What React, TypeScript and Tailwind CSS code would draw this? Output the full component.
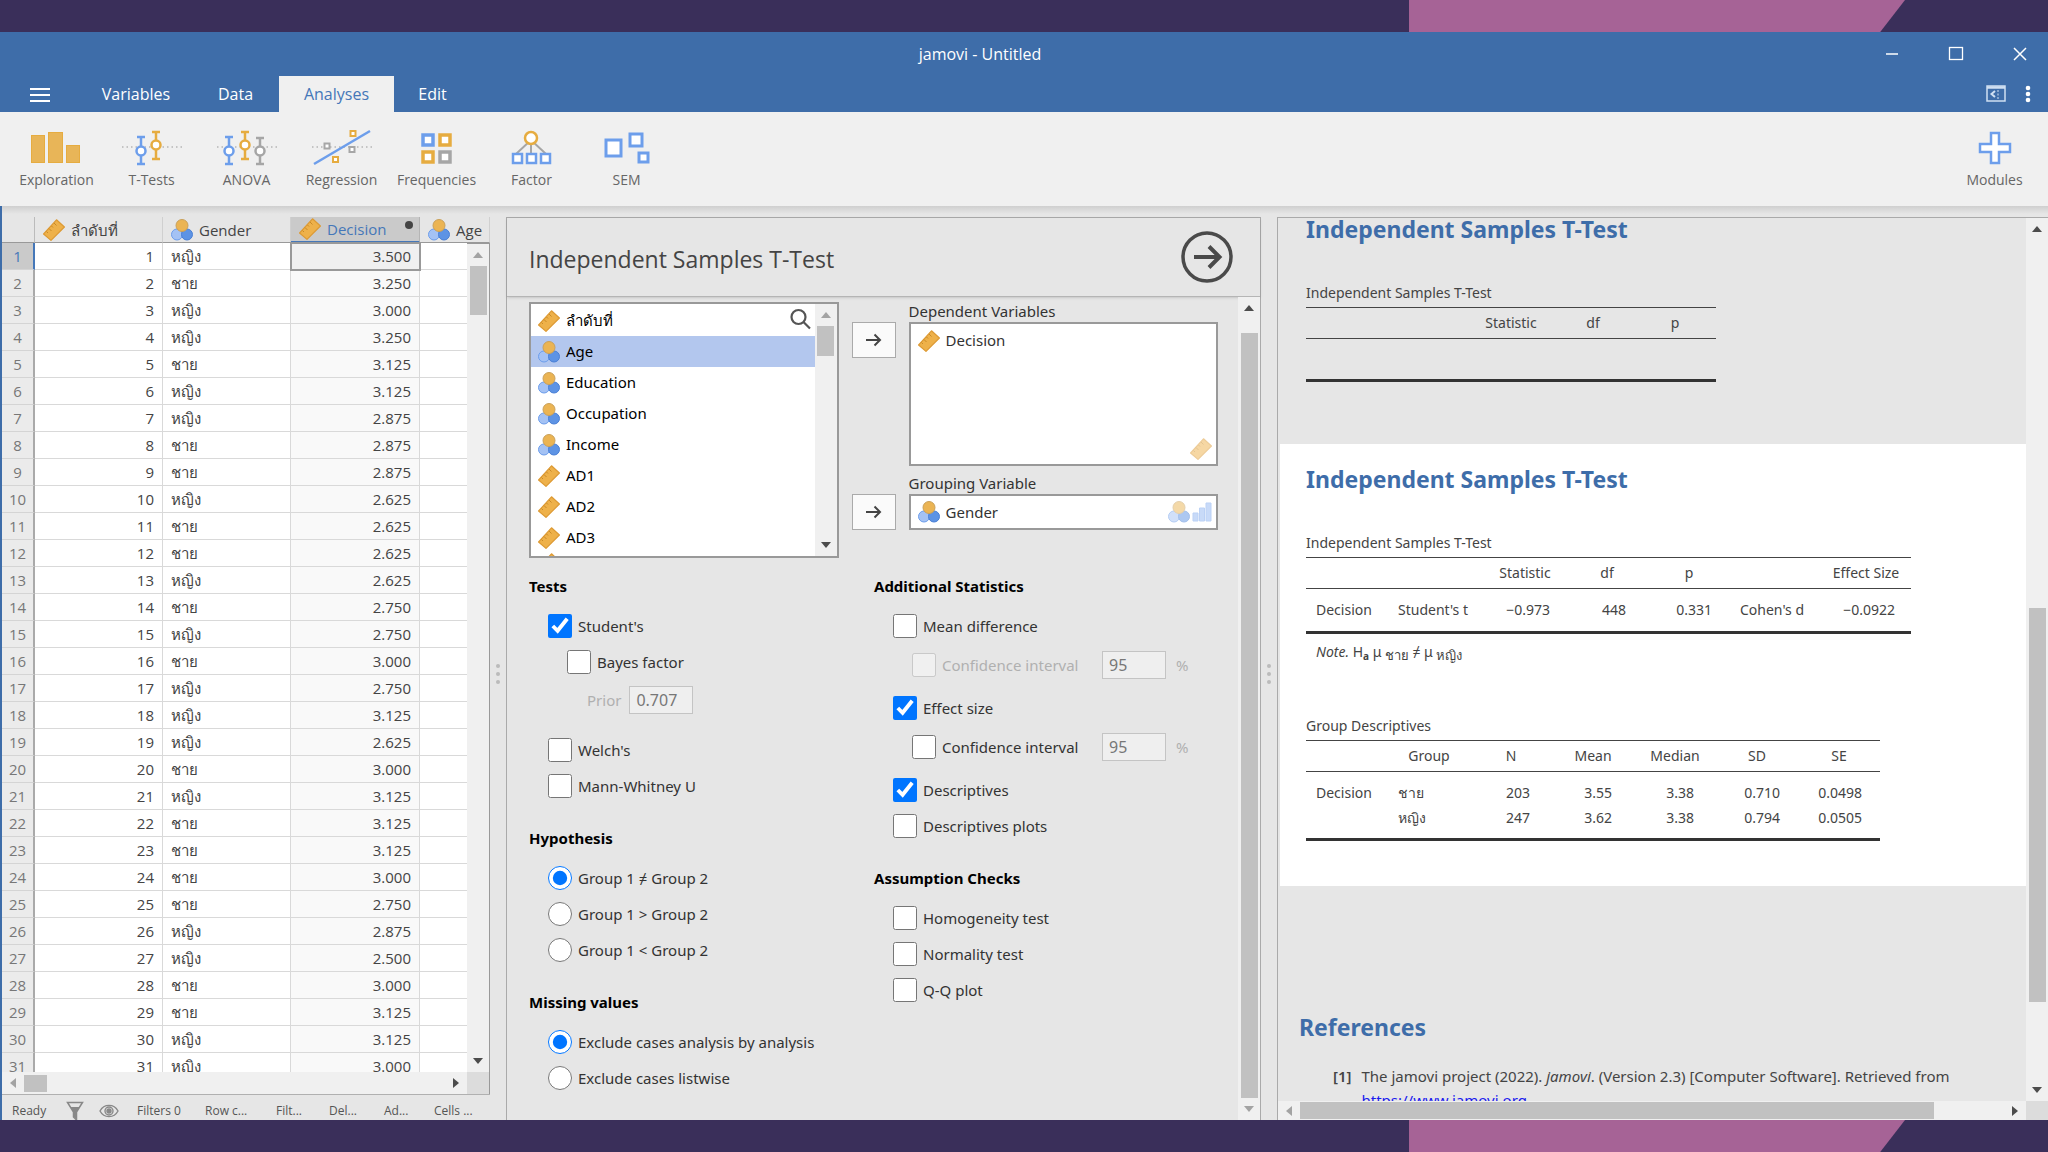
import React from "react";
import { clsx } from "clsx";

/* ---------- data ---------- */

const FEMALE = "หญิง";
const MALE = "ชาย";

const rows: [string, string][] = [
  [FEMALE, "3.500"], [MALE, "3.250"], [FEMALE, "3.000"], [FEMALE, "3.250"], [MALE, "3.125"],
  [FEMALE, "3.125"], [FEMALE, "2.875"], [MALE, "2.875"], [MALE, "2.875"], [FEMALE, "2.625"],
  [MALE, "2.625"], [MALE, "2.625"], [FEMALE, "2.625"], [MALE, "2.750"], [FEMALE, "2.750"],
  [MALE, "3.000"], [FEMALE, "2.750"], [FEMALE, "3.125"], [FEMALE, "2.625"], [MALE, "3.000"],
  [FEMALE, "3.125"], [MALE, "3.125"], [MALE, "3.125"], [MALE, "3.000"], [MALE, "2.750"],
  [FEMALE, "2.875"], [FEMALE, "2.500"], [MALE, "3.000"], [MALE, "3.125"], [FEMALE, "3.125"],
  [FEMALE, "3.000"],
];

const BLUE = "#6d9eeb";
const ORANGE = "#e6ac40";
const GREY = "#a6a6a6";

/* ---------- icons ---------- */

function Ruler({ faded }: { faded?: boolean }) {
  return (
    <svg viewBox="0 0 22 22" className={clsx("size-[22px] shrink-0", faded && "opacity-50")} aria-hidden="true">
      <path d="M13.500 0.800 L21.400 8 L8 21.400 L0.600 15 Z" fill="#eeb14a" stroke="#dd9a34" strokeWidth="1.200" strokeLinejoin="round" />
      <path d="M3.500 12.500 l1.500 1.500 M6 9.500 l2.500 2.500 M8.500 7 l1.500 1.500 M11 4 l2.500 2.500" stroke="#c98a28" strokeWidth="1" />
    </svg>
  );
}

function Nominal({ faded }: { faded?: boolean }) {
  return (
    <svg viewBox="0 0 22 22" className={clsx("size-[22px] shrink-0", faded && "opacity-50")} aria-hidden="true">
      <circle cx="6" cy="15.500" r="5.500" fill="#a4c2f4" stroke="#6d9eeb" />
      <circle cx="16" cy="15.500" r="5.500" fill="#5d93e4" stroke="#4a80d6" />
      <circle cx="11" cy="6.500" r="6" fill="#ebb453" stroke="#c9a05a" />
    </svg>
  );
}

function Ordinal() {
  return (
    <svg viewBox="0 0 20 20" className="size-5 shrink-0 opacity-60" aria-hidden="true">
      <path d="M1 19V11H6V19ZM7.500 19V6H12.500V19ZM14 19V1H19V19Z" fill="#a4c2f4" stroke="#8fb4f0" />
    </svg>
  );
}

const ribbonSvg = "h-10 w-[60px]";

function ErrorBar({ x, top, bottom, mid, color }: { x: number; top: number; bottom: number; mid: number; color: string }) {
  return (
    <g stroke={color} strokeWidth="2.500" fill="none">
      <path d={`M${x - 4} ${top}H${x + 4}M${x - 4} ${bottom}H${x + 4}M${x} ${top}V${bottom}`} />
      <circle cx={x} cy={mid} r="4.500" fill="#fff" />
    </g>
  );
}

const dotted = <path d="M0 19H60" stroke="#b5b5b5" strokeWidth="1.500" strokeDasharray="1.500 3" />;

const ribbon: { label: string; icon: React.ReactNode }[] = [
  {
    label: "Exploration",
    icon: (
      <g fill="#e8b558" stroke="#e6ac40">
        <rect x="4.500" y="7.500" width="13" height="27" />
        <rect x="21.500" y="4.500" width="14" height="30" />
        <rect x="39.500" y="17.500" width="13" height="17" />
      </g>
    ),
  },
  {
    label: "T-Tests",
    icon: (
      <>
        {dotted}
        <ErrorBar x={19} top={9} bottom={36} mid={23} color={BLUE} />
        <ErrorBar x={34} top={4} bottom={31} mid={17} color={ORANGE} />
      </>
    ),
  },
  {
    label: "ANOVA",
    icon: (
      <>
        {dotted}
        <ErrorBar x={12} top={9} bottom={36} mid={23} color={BLUE} />
        <ErrorBar x={28} top={4} bottom={31} mid={17} color={ORANGE} />
        <ErrorBar x={43} top={10} bottom={36} mid={23} color={GREY} />
      </>
    ),
  },
  {
    label: "Regression",
    icon: (
      <>
        {dotted}
        <path d="M2 36L58 3" stroke={BLUE} strokeWidth="2.500" />
        <g fill="#fff" strokeWidth="2">
          <rect x="12.500" y="15.500" width="5" height="5" stroke={GREY} />
          <rect x="38.500" y="3" width="5" height="5" stroke={ORANGE} />
          <rect x="37.500" y="19" width="5" height="5" stroke={GREY} />
          <rect x="21" y="29" width="5" height="5" stroke={ORANGE} />
        </g>
      </>
    ),
  },
  {
    label: "Frequencies",
    icon: (
      <g fill="#fff" strokeWidth="3.500">
        <rect x="16" y="7" width="10" height="10" stroke={BLUE} />
        <rect x="33" y="7" width="10" height="10" stroke={ORANGE} />
        <rect x="16" y="24" width="10" height="10" stroke={ORANGE} />
        <rect x="33" y="24" width="10" height="10" stroke={GREY} />
      </g>
    ),
  },
  {
    label: "Factor",
    icon: (
      <>
        <path d="M29 12L14 26M29 12V26M29 12L44 26" stroke={GREY} strokeWidth="2" />
        <circle cx="29" cy="10" r="6" fill="#fff" stroke={ORANGE} strokeWidth="2.500" />
        <g fill="#fff" stroke={BLUE} strokeWidth="2.500">
          <rect x="11" y="26" width="9" height="9" />
          <rect x="25" y="26" width="9" height="9" />
          <rect x="39" y="26" width="9" height="9" />
        </g>
      </>
    ),
  },
  {
    label: "SEM",
    icon: (
      <g fill="#fff" stroke={BLUE} strokeWidth="3">
        <rect x="9" y="12" width="15" height="16" />
        <rect x="33" y="6" width="12" height="12" />
        <rect x="42" y="25" width="9" height="9" />
      </g>
    ),
  },
];

/* ---------- scrollbars ---------- */

function Arrow({ dir, dim }: { dir: "up" | "down" | "left" | "right"; dim?: boolean }) {
  const d = {
    up: "M1 9L6 3L11 9Z",
    down: "M1 3L6 9L11 3Z",
    left: "M9 1L3 6L9 11Z",
    right: "M3 1L9 6L3 11Z",
  }[dir];
  return (
    <svg viewBox="0 0 12 12" className={clsx("size-3 shrink-0", dim ? "text-[#a3a3a3]" : "text-[#4c4c4c]")} aria-hidden="true">
      <path d={d} fill="currentColor" />
    </svg>
  );
}

function VScroll({ before, size, upDim, downDim }: { before: string; size: string; upDim?: boolean; downDim?: boolean }) {
  return (
    <div className="flex w-[22px] shrink-0 flex-col items-center bg-[#f0f0f0]">
      <div className="flex h-[22px] shrink-0 items-center"><Arrow dir="up" dim={upDim} /></div>
      <div className="flex min-h-0 w-[17px] flex-1 flex-col">
        <div className={before} />
        <div className={clsx("bg-[#c1c1c1]", size)} />
      </div>
      <div className="flex h-[22px] shrink-0 items-center"><Arrow dir="down" dim={downDim} /></div>
    </div>
  );
}

function HScroll({ size }: { size: string }) {
  return (
    <div className="flex h-full flex-1 items-center bg-[#f0f0f0]">
      <div className="flex w-[22px] shrink-0 justify-center"><Arrow dir="left" dim /></div>
      <div className="h-[17px] min-w-0 flex-1"><div className={clsx("h-full bg-[#c1c1c1]", size)} /></div>
      <div className="flex w-[22px] shrink-0 justify-center"><Arrow dir="right" /></div>
    </div>
  );
}

/* ---------- header ---------- */

function TitleBar() {
  return (
    <div className="grid h-11 shrink-0 grid-cols-[1fr_auto_1fr] items-center text-white">
      <span />
      <h1 className="pr-[88px] text-base">jamovi - Untitled</h1>
      <div className="flex justify-end gap-[38px] pr-[15px]">
        <button aria-label="Minimize" className="p-1">
          <svg viewBox="0 0 18 18" className="size-[18px]"><path d="M3 9H15" stroke="#fff" strokeWidth="1.500" /></svg>
        </button>
        <button aria-label="Maximize" className="p-1">
          <svg viewBox="0 0 18 18" className="size-[18px]"><rect x="2.500" y="2.500" width="13" height="12" fill="none" stroke="#fff" strokeWidth="1.300" /></svg>
        </button>
        <button aria-label="Close" className="p-1">
          <svg viewBox="0 0 18 18" className="size-[18px]"><path d="M3 3L15 15M15 3L3 15" stroke="#fff" strokeWidth="1.500" /></svg>
        </button>
      </div>
    </div>
  );
}

function Tabs() {
  return (
    <div className="flex h-9 shrink-0 items-stretch text-base text-white">
      <button aria-label="Menu" className="flex w-20 items-center justify-center">
        <svg viewBox="0 0 20 16" className="h-4 w-5"><path d="M0 3H20M0 9H20M0 15H20" stroke="#fff" strokeWidth="2.200" /></svg>
      </button>
      <button className="w-28">Variables</button>
      <button className="w-[87px]">Data</button>
      <button className="w-[115px] bg-[#f0f0f0] text-[#4577b8]">Analyses</button>
      <button className="w-[77px]">Edit</button>
      <div className="ml-auto flex items-center gap-[18px] pr-4">
        <button aria-label="Toggle results pane">
          <svg viewBox="0 0 20 18" className="h-[18px] w-5" fill="none" stroke="#cfdff2">
            <rect x="1" y="1" width="18" height="15" strokeWidth="1.500" />
            <path d="M1 2.500H19" strokeWidth="2.500" />
            <path d="M9 6L5.500 9L9 12" strokeWidth="2" />
            <path d="M12 5V15" strokeDasharray="2 1.500" />
          </svg>
        </button>
        <button aria-label="More options">
          <svg viewBox="0 0 8 18" className="h-[18px] w-2" fill="#fff"><circle cx="4" cy="3" r="2.300" /><circle cx="4" cy="9" r="2.300" /><circle cx="4" cy="15" r="2.300" /></svg>
        </button>
      </div>
    </div>
  );
}

function Ribbon() {
  return (
    <nav className="flex h-[94px] shrink-0 bg-[#f0f0f0] pl-[9px] text-sm text-[#666]">
      {ribbon.map((item) => (
        <button key={item.label} className="flex w-[95px] flex-col items-center pt-4">
          <svg viewBox="0 0 60 40" className={ribbonSvg} fill="none" aria-hidden="true">{item.icon}</svg>
          <span className="mt-0.5">{item.label}</span>
        </button>
      ))}
      <button className="mr-1.5 ml-auto flex w-[95px] flex-col items-center pt-4">
        <svg viewBox="0 0 60 40" className={ribbonSvg} aria-hidden="true">
          <path d="M26 5H34V16H45V24H34V35H26V24H15V16H26Z" fill="#fff" stroke={BLUE} strokeWidth="2.500" />
        </svg>
        <span className="mt-0.5">Modules</span>
      </button>
    </nav>
  );
}

/* ---------- spreadsheet ---------- */

function ColumnHead({ icon, label, active }: { icon: React.ReactNode; label: string; active?: boolean }) {
  return (
    <th
      className={clsx(
        "h-[26px] border-r border-b p-0 text-left font-normal",
        active ? "border-r-[#b5b5b5] border-b-2 border-b-[#4577b8] bg-[#cacaca] text-[#4577b8]" : "border-r-[#d0d0d0] border-b-[#999] text-[#444]",
      )}
    >
      <div className="relative flex h-6 items-center gap-1.5 pl-2">
        {icon}
        <span className="leading-6">{label}</span>
        {active && <span className="absolute top-1 right-1.5 size-2 rounded-full bg-[#444]" />}
      </div>
    </th>
  );
}

function DataSheet() {
  return (
    <section className="flex min-h-0 w-[488px] shrink-0 flex-col">
      <div className="flex min-h-0 flex-1 border-b border-[#b0b0b0]">
        <div className="flex min-h-0 min-w-0 flex-1 flex-col">
          <div className="min-h-0 flex-1 overflow-hidden">
            <table className="w-full table-fixed border-separate border-spacing-0 text-[15px] leading-5 text-[#444]">
              <colgroup>
                <col className="w-[33px]" />
                <col className="w-32" />
                <col className="w-32" />
                <col className="w-[129px]" />
                <col />
              </colgroup>
              <thead>
                <tr>
                  <th aria-label="Row" className="border-r border-b border-r-[#bbb] border-b-[#999]" />
                  <ColumnHead icon={<Ruler />} label="ลำดับที่" />
                  <ColumnHead icon={<Nominal />} label="Gender" />
                  <ColumnHead icon={<Ruler />} label="Decision" active />
                  <ColumnHead icon={<Nominal />} label="Age" />
                </tr>
              </thead>
              <tbody>
                {rows.map(([gender, value], i) => (
                  <tr key={i}>
                    <th
                      className={clsx(
                        "h-[27px] overflow-hidden border-r-2 border-b border-b-[#d4d4d4] p-0 font-normal",
                        i === 0 ? "border-r-[#4577b8] bg-[#cacaca] text-[#4577b8]" : "border-r-[#aaa] bg-[#ebebeb] text-[#777]",
                      )}
                    >
                      {i + 1}
                    </th>
                    <td className="border-r border-b border-[#d9d9d9] bg-white py-0 pr-2 pl-0 text-right">{i + 1}</td>
                    <td className="border-r border-b border-[#d9d9d9] bg-white py-0 pr-0 pl-2">{gender}</td>
                    <td
                      className={clsx(
                        "border-r border-b py-0 pr-2 pl-0 text-right",
                        i === 0 ? "border-[#999] bg-[#f0f0f0] outline-2 -outline-offset-1 outline-[#999]" : "border-[#d9d9d9] bg-[#f9f9f9]",
                      )}
                    >
                      {value}
                    </td>
                    <td className="border-b border-[#d9d9d9] bg-white" />
                  </tr>
                ))}
              </tbody>
            </table>
          </div>
          <div className="flex h-[22px] shrink-0 pr-[23px]"><HScroll size="w-[23px]" /></div>
        </div>
        <div className="relative mt-[26px] -ml-[23px] flex w-[23px] shrink-0 flex-col">
          <div className="flex min-h-0 flex-1 border-t border-r border-[#999]">
            <VScroll before="h-0" size="h-[49px]" upDim />
          </div>
          <div className="h-[22px] border-r border-[#999] bg-[#dcdcdc]" />
        </div>
      </div>
      <footer className="flex h-[25px] shrink-0 items-center pt-1.5 pl-2.5 text-xs text-[#555]">
        <span className="w-[54px]">Ready</span>
        <button aria-label="Filters" className="w-[33px]">
          <svg viewBox="0 0 18 20" className="h-5 w-[18px]" fill="none" stroke="#888" strokeWidth="1.500">
            <path d="M1.500 1.500H16.500L10.500 11V19L7.500 16V11Z" />
            <path d="M4.500 6H13.500L10.500 11V18L7.500 16V11Z" fill="#888" stroke="none" />
          </svg>
        </button>
        <button aria-label="Show filtered rows" className="w-[38px]">
          <svg viewBox="0 0 20 14" className="h-[14px] w-5" fill="none" stroke="#888" strokeWidth="1.400">
            <path d="M1 7C5 -0.500 15 -0.500 19 7C15 14.500 5 14.500 1 7Z" /><circle cx="10" cy="7" r="4" /><circle cx="10" cy="7" r="2" fill="#888" />
          </svg>
        </button>
        <span className="w-[68px]">Filters 0</span>
        <span className="w-[71px]">Row c...</span>
        <span className="w-[53px]">Filt...</span>
        <span className="w-[55px]">Del...</span>
        <span className="w-[50px]">Ad...</span>
        <span className="whitespace-nowrap">Cells ...</span>
      </footer>
    </section>
  );
}

function Splitter() {
  return (
    <div className="flex w-4 shrink-0 flex-col items-center justify-center gap-1 pt-2.5" role="separator">
      <span className="size-1 rounded-full bg-[#bbb]" />
      <span className="size-1 rounded-full bg-[#bbb]" />
      <span className="size-1 rounded-full bg-[#bbb]" />
    </div>
  );
}

/* ---------- analysis options ---------- */

function VarItem({ kind, label, selected }: { kind: "ruler" | "nominal"; label: string; selected?: boolean }) {
  return (
    <li className={clsx("flex h-[31px] shrink-0 items-center gap-1.5 pl-[7px]", selected && "bg-[#b3c7ee]")}>
      {kind === "ruler" ? <Ruler /> : <Nominal />}
      <span>{label}</span>
    </li>
  );
}

function AssignButton({ label }: { label: string }) {
  return (
    <button aria-label={label} className="flex h-9 w-11 items-center justify-center border border-[#aaa] bg-[#fafafa]">
      <svg viewBox="0 0 18 16" className="h-4 w-[18px]" fill="none" stroke="#444" strokeWidth="2"><path d="M1 8H15M9.500 2.500L15 8L9.500 13.500" /></svg>
    </button>
  );
}

function Option({ type = "checkbox", name, label, checked, disabled, indent }: {
  type?: "checkbox" | "radio"; name?: string; label: string; checked?: boolean; disabled?: boolean; indent?: boolean;
}) {
  return (
    <label className={clsx("flex h-9 items-center gap-1.5", indent ? "pl-[38px]" : "pl-[19px]", disabled && "text-[#b0b0b0]")}>
      <input type={type} name={name} defaultChecked={checked} disabled={disabled} className="m-0 size-6 shrink-0 accent-[#0075ff]" />
      <span>{label}</span>
    </label>
  );
}

function OptHeading({ children }: { children: React.ReactNode }) {
  return <h3 className="flex h-11 items-center font-bold text-black">{children}</h3>;
}

const numberBox = "h-7 w-16 border border-[#c4c4c4] bg-[#efefef] px-1.5 text-base text-[#777]";

function ConfidenceRow({ disabled, id }: { disabled?: boolean; id: string }) {
  return (
    <div className="mb-1 flex h-[42px] items-center">
      <div className="w-[228px]"><Option label="Confidence interval" indent disabled={disabled} /></div>
      <input id={id} aria-label="Confidence level" defaultValue="95" disabled className={numberBox} />
      <label htmlFor={id} className="ml-2.5 text-[#b0b0b0]">%</label>
    </div>
  );
}

function OptionsPanel() {
  return (
    <section className="flex min-h-0 w-[755px] shrink-0 flex-col border-t border-r border-l border-[#aaa]">
      <header className="flex h-[79px] shrink-0 items-center justify-between border-b border-[#b5b5b5] pr-[27px] pl-[22px] shadow-sm">
        <h2 className="pt-1 text-[23px] text-[#444]">Independent Samples T-Test</h2>
        <button aria-label="Hide options">
          <svg viewBox="0 0 52 52" className="size-[52px]" fill="none" stroke="#4a4a4a">
            <circle cx="26" cy="26" r="24" strokeWidth="3.500" />
            <path d="M13 26H38M28 15.500L38.500 26L28 36.500" strokeWidth="4" />
          </svg>
        </button>
      </header>
      <div className="flex min-h-0 flex-1">
        <div className="min-w-0 flex-1 overflow-hidden pt-[5px] pr-5 pl-[22px] font-['Noto_Sans','Open_Sans',sans-serif] text-[15px] text-[#333]">
          <div className="flex gap-[13px]">
            <div className="flex h-64 w-[310px] border-2 border-[#999] bg-white">
              <div className="relative min-w-0 flex-1 overflow-hidden">
                <ul className="flex flex-col pt-px text-black">
                  <VarItem kind="ruler" label="ลำดับที่" />
                  <VarItem kind="nominal" label="Age" selected />
                  <VarItem kind="nominal" label="Education" />
                  <VarItem kind="nominal" label="Occupation" />
                  <VarItem kind="nominal" label="Income" />
                  <VarItem kind="ruler" label="AD1" />
                  <VarItem kind="ruler" label="AD2" />
                  <VarItem kind="ruler" label="AD3" />
                  <li className="pl-[7px]"><Ruler /></li>
                </ul>
                <button aria-label="Search variables" className="absolute top-1 right-1">
                  <svg viewBox="0 0 22 22" className="size-[22px]" fill="none" stroke="#555" strokeWidth="2.200"><circle cx="9.500" cy="9" r="7" /><path d="M14.500 14L21 20.500" /></svg>
                </button>
              </div>
              <VScroll before="h-0" size="h-[30px]" upDim />
            </div>
            <div className="flex flex-col gap-[136px] pt-5">
              <AssignButton label="Move to dependent variables" />
              <AssignButton label="Move to grouping variable" />
            </div>
            <div className="w-[310px]">
              <div className="h-5 leading-[18px]">Dependent Variables</div>
              <ul className="relative h-36 border-2 border-[#999] bg-white pt-px">
                <VarItem kind="ruler" label="Decision" />
                <li className="absolute right-1 bottom-1"><Ruler faded /></li>
              </ul>
              <div className="mt-2 h-5 leading-[18px]">Grouping Variable</div>
              <ul className="flex h-9 items-center justify-between border-2 border-[#999] bg-white pr-1">
                <VarItem kind="nominal" label="Gender" />
                <li className="flex items-center gap-0.5"><Nominal faded /><Ordinal /></li>
              </ul>
            </div>
          </div>

          <div className="mt-1.5 grid grid-cols-[345px_1fr]">
            <div className="flex flex-col gap-3">
              <div>
                <OptHeading>Tests</OptHeading>
                <Option label="Student's" checked />
                <Option label="Bayes factor" indent />
                <div className="flex h-10 items-center gap-2 pl-[58px]">
                  <label htmlFor="prior" className="text-[#b0b0b0]">Prior</label>
                  <input id="prior" defaultValue="0.707" disabled className={numberBox} />
                </div>
                <div className="mt-3">
                  <Option label="Welch's" />
                  <Option label="Mann-Whitney U" />
                </div>
              </div>
              <div>
                <OptHeading>Hypothesis</OptHeading>
                <Option type="radio" name="hyp" label="Group 1 ≠ Group 2" checked />
                <Option type="radio" name="hyp" label="Group 1 > Group 2" />
                <Option type="radio" name="hyp" label="Group 1 < Group 2" />
              </div>
              <div>
                <OptHeading>Missing values</OptHeading>
                <Option type="radio" name="miss" label="Exclude cases analysis by analysis" checked />
                <Option type="radio" name="miss" label="Exclude cases listwise" />
              </div>
            </div>
            <div className="flex flex-col gap-3">
              <div>
                <OptHeading>Additional Statistics</OptHeading>
                <Option label="Mean difference" />
                <ConfidenceRow id="ci-mean" disabled />
                <Option label="Effect size" checked />
                <ConfidenceRow id="ci-effect" />
                <Option label="Descriptives" checked />
                <Option label="Descriptives plots" />
              </div>
              <div>
                <OptHeading>Assumption Checks</OptHeading>
                <Option label="Homogeneity test" />
                <Option label="Normality test" />
                <Option label="Q-Q plot" />
              </div>
            </div>
          </div>
        </div>
        <VScroll before="h-[14px]" size="flex-1" downDim />
      </div>
    </section>
  );
}

/* ---------- results ---------- */

const resultTitle = "text-[23px] leading-[22px] font-bold text-[#3e6da9]";
const th = "h-[31px] border-t border-b border-[#444] p-0 text-center font-normal";
const caption = "pb-0.5 text-left text-sm leading-6";

function Results() {
  return (
    <section className="flex min-w-0 flex-1 flex-col border-t border-l border-[#aaa]">
      <div className="flex min-h-0 flex-1">
        <div className="min-w-0 flex-1 overflow-hidden pl-0.5 font-['Noto_Sans','Open_Sans',sans-serif] text-sm text-[#444]">
          <article className="h-[226px] pl-[26px]">
            <h2 className={resultTitle}>Independent Samples T-Test</h2>
            <table className="mt-[41px] w-[410px] table-fixed border-b-3 border-[#333]">
              <caption className={caption}>Independent Samples T-Test</caption>
              <thead>
                <tr>
                  <th className={clsx(th, "w-[82px]")} /><th className={clsx(th, "w-[82px]")} />
                  <th className={th}>Statistic</th><th className={th}>df</th><th className={th}>p</th>
                </tr>
              </thead>
              <tbody><tr><td colSpan={5} className="h-[42px]" /></tr></tbody>
            </table>
          </article>

          <article className="h-[442px] bg-white pt-6 pl-[26px]">
            <h2 className={resultTitle}>Independent Samples T-Test</h2>
            <table className="mt-[41px] w-[605px] table-fixed border-b-3 border-[#333]">
              <caption className={caption}>Independent Samples T-Test</caption>
              <colgroup>
                <col className="w-[82px]" /><col className="w-24" /><col className="w-[82px]" /><col className="w-[82px]" />
                <col className="w-[82px]" /><col className="w-[91px]" /><col />
              </colgroup>
              <thead>
                <tr>
                  <th className={th} /><th className={th} /><th className={th}>Statistic</th><th className={th}>df</th>
                  <th className={th}>p</th><th className={th} /><th className={th}>Effect Size</th>
                </tr>
              </thead>
              <tbody>
                <tr className="h-11">
                  <td className="pl-2.5">Decision</td>
                  <td className="pl-2.5">Student's t</td>
                  <td className="pr-4 text-right">−0.973</td>
                  <td className="pr-[22px] text-right">448</td>
                  <td className="pr-[18px] text-right">0.331</td>
                  <td className="pl-2.5">Cohen's d</td>
                  <td className="pr-4 text-right">−0.0922</td>
                </tr>
              </tbody>
            </table>
            <p className="mt-1.5 h-6 pl-2.5 leading-6">
              <i>Note.</i> H<sub className="text-[10px] font-bold">a</sub> μ<sub className="text-[13px]">&nbsp;{MALE}</sub> ≠ μ<sub className="text-[13px]">&nbsp;{FEMALE}</sub>
            </p>
            <table className="mt-[50px] w-[574px] table-fixed border-b-3 border-[#333]">
              <caption className={caption}>Group Descriptives</caption>
              <thead>
                <tr>
                  <th className={th} /><th className={th}>Group</th><th className={th}>N</th><th className={th}>Mean</th>
                  <th className={th}>Median</th><th className={th}>SD</th><th className={th}>SE</th>
                </tr>
              </thead>
              <tbody>
                {[
                  ["Decision", MALE, "203", "3.55", "3.38", "0.710", "0.0498"],
                  ["", FEMALE, "247", "3.62", "3.38", "0.794", "0.0505"],
                ].map((r, i) => (
                  <tr key={i} className="leading-[25px]">
                    {r.map((c, j) => (
                      <td key={j} className={clsx("px-0", i === 0 ? "pt-2" : "pb-2", j < 2 ? "pl-2.5" : j > 4 ? "pr-[18px] text-right" : "pr-[22px] text-right")}>{c}</td>
                    ))}
                  </tr>
                ))}
              </tbody>
            </table>
          </article>

          <article className="pt-[130px] pl-[19px]">
            <h2 className={resultTitle}>References</h2>
            <div className="mt-[26px] flex gap-2.5 pl-[34px] text-[15px] leading-6">
              <b className="font-semibold">[1]</b>
              <p className="w-[640px]">
                The jamovi project (2022). <i>jamovi</i>. (Version 2.3) [Computer Software]. Retrieved from{" "}
                <a href="https://www.jamovi.org" className="text-[#1a1aee] underline">https://www.jamovi.org</a>.
              </p>
            </div>
          </article>
        </div>
        <VScroll before="flex-[367]" size="flex-[393] mb-[77px]" />
      </div>
      <div className="flex h-[19px] shrink-0">
        <HScroll size="w-[90%]" />
        <div className="w-[22px] bg-[#dcdcdc]" />
      </div>
    </section>
  );
}

/* ---------- page ---------- */

function Backdrop() {
  return (
    <div className="h-8 shrink-0 bg-[#3a2f5a]">
      <div className="ml-[68.8%] h-full w-[496px] bg-[#a66396] [clip-path:polygon(0_0,100%_0,95%_100%,0_100%)]" />
    </div>
  );
}

export default function App() {
  return (
    <div className="flex h-screen flex-col overflow-hidden bg-[#e6e6e6] font-['Open_Sans','Noto_Sans',sans-serif]">
      <Backdrop />
      <header className="flex shrink-0 flex-col bg-[#3e6da9]">
        <TitleBar />
        <Tabs />
        <Ribbon />
      </header>
      <main className="flex min-h-0 flex-1 border-l-2 border-[#3e6da9]">
        <div className="flex min-h-0 min-w-0 flex-1 bg-[linear-gradient(#cfcfcf,#e6e6e6_8px)] pt-[11px]">
          <DataSheet />
          <Splitter />
          <OptionsPanel />
          <Splitter />
          <Results />
        </div>
      </main>
      <Backdrop />
    </div>
  );
}
